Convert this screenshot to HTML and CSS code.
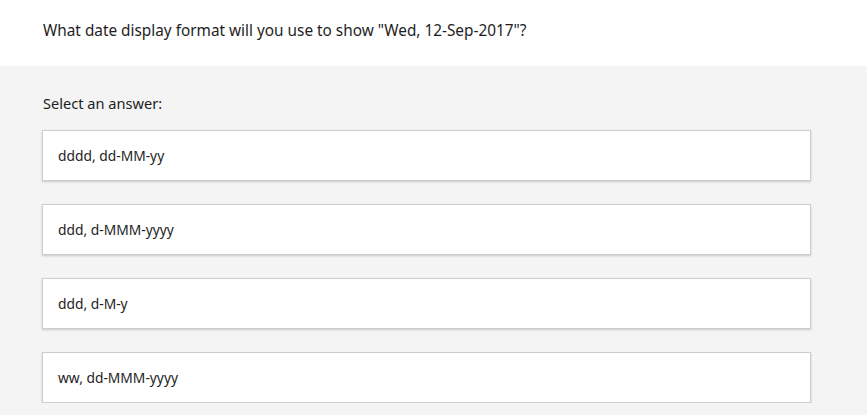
FILE: index.html
```html
<!DOCTYPE html>
<html lang="en">
<head>
  <meta charset="UTF-8" />
  <meta name="viewport" content="width=device-width, initial-scale=1.0"/>
  <title>Quiz Question</title>
  <link rel="stylesheet" href="styles.css">
</head>
<body>
  <div class="question">
    What date display format will you use to show "Wed, 12-Sep-2017"?
  </div>

  <div class="answers">
    <p class="prompt">Select an answer:</p>
    <ul class="options">
      <li class="option">dddd, dd-MM-yy</li>
      <li class="option">ddd, d-MMM-yyyy</li>
      <li class="option">ddd, d-M-y</li>
      <li class="option">ww, dd-MMM-yyyy</li>
    </ul>
  </div>
</body>
</html>
```

FILE: styles.css
```css
* {
  margin: 0;
  padding: 0;
  box-sizing: border-box;
  font-family: "Noto Sans", "Open Sans", sans-serif;
}

body {
  background-color: #f4f4f4;
  color: #1e1e1e;
}

.question {
  background-color: #ffffff;
  height: 66px;
  padding: 19px 43px 0;
  font-size: 15.35px;
  line-height: 22px;
}

.answers {
  padding: 27px 56px 0 42px;
}

.prompt {
  font-size: 14.6px;
  line-height: 20px;
  padding-left: 1px;
  margin-bottom: 17px;
}

.options {
  list-style: none;
  display: flex;
  flex-direction: column;
  gap: 23px;
}

.option {
  background-color: #ffffff;
  border: 1px solid #cdcdcd;
  box-shadow: 0 1px 2px rgba(0, 0, 0, 0.18);
  height: 51px;
  padding: 0 15px;
  display: flex;
  align-items: center;
  font-size: 13.8px;
  cursor: pointer;
}
```
